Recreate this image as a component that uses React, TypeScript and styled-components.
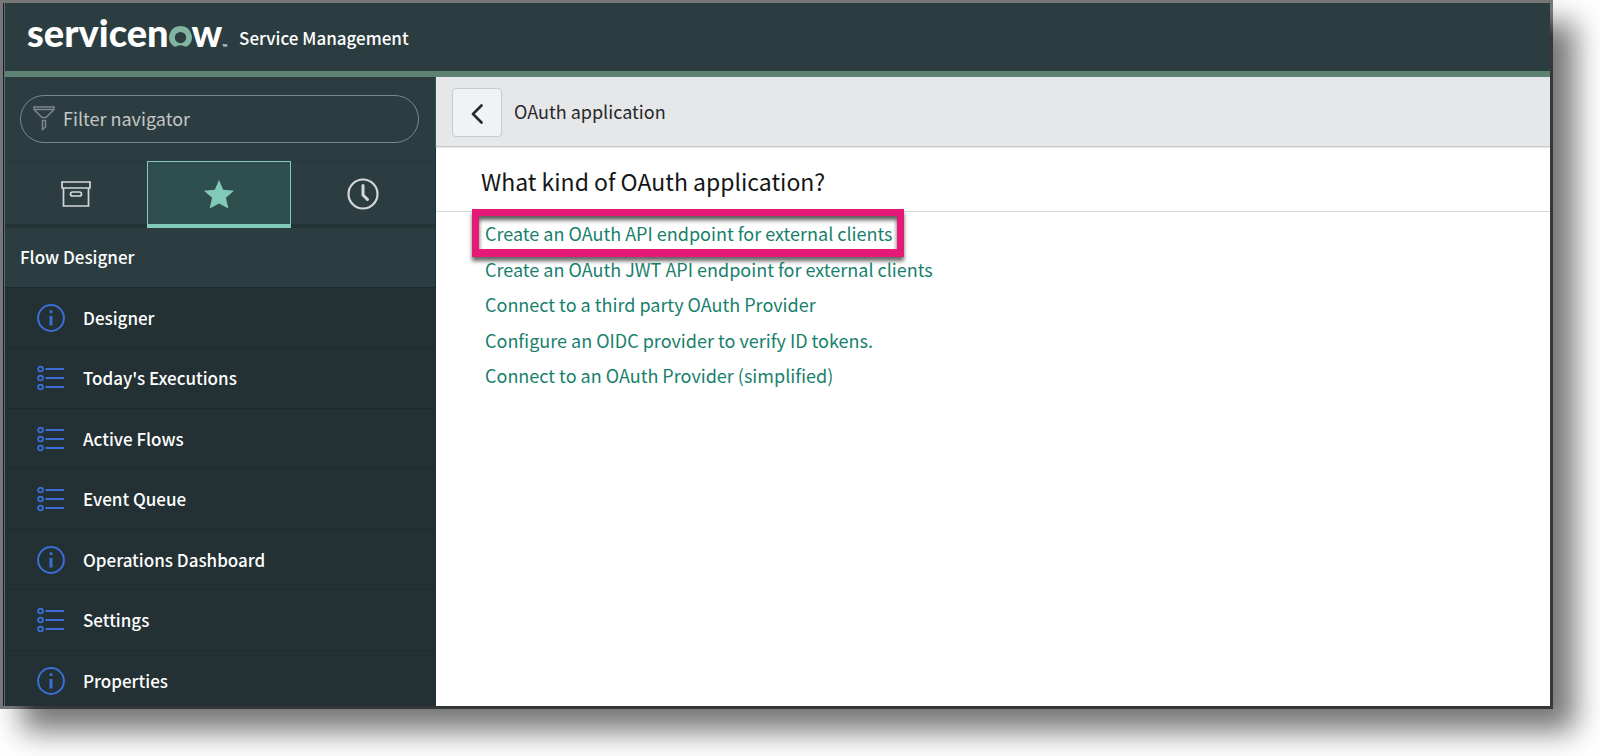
import React from "react";
import styled, { createGlobalStyle, css } from "styled-components";

const GlobalStyle = createGlobalStyle`
  *, *::before, *::after { box-sizing: border-box; }
  body {
    margin: 0;
    background: #fff;
    color: #26282a;
    font-family: "Noto Sans CJK SC", "Noto Sans", sans-serif;
    font-size: 18px;
    line-height: 24px;
  }
  button, input { font: inherit; color: inherit; }
`;

const Page = styled.div`
  display: flex;
  height: 100vh;
  padding: 0 47px 47px 0;
  overflow: hidden;
`;

const Frame = styled.div`
  flex: 1;
  min-width: 0;
  display: flex;
  padding: 3px;
  background:
    linear-gradient(to bottom, #777 12px, #363738 36px) right top / 3px 100% no-repeat,
    linear-gradient(to right, #777 12px, #363738 36px) left bottom / 100% 3px no-repeat,
    #777;
  box-shadow: 22px 22px 28px rgba(0, 0, 0, 0.54);
`;

const Window = styled.div`
  flex: 1;
  min-width: 0;
  display: flex;
  flex-direction: column;
  border-left: 1px solid #1c1730;
  background: #fff;
  overflow: hidden;
`;

const Banner = styled.header`
  flex: none;
  display: flex;
  align-items: center;
  gap: 12px;
  height: 74px;
  padding: 0 0 6px 22px;
  border-left: 1px solid #5c6e70;
  border-bottom: 6px solid #5d8272;
  background: #2b3d41;
  color: #fff;
`;

const Logo = styled.a`
  display: flex;
  align-items: baseline;
  margin-bottom: 4px;
  color: #fff;
  font-family: Lato, sans-serif;
  font-size: 38px;
  font-weight: 900;
  line-height: 40px;
  text-decoration: none;
`;

const LogoRing = styled.svg`
  width: 23px;
  height: 21px;
`;

const Trademark = styled.small`
  font-size: 3px;
  line-height: 4px;
`;

const Product = styled.span`
  padding-top: 8px;
  font-size: 17px;
  font-weight: 500;
`;

const Body = styled.div`
  flex: 1;
  min-height: 0;
  display: flex;
`;

const Sidebar = styled.nav`
  flex: none;
  width: 432px;
  border-left: 1px solid #5c6e70;
  border-right: 1px solid #12343d;
  background: #2b3d41;
  color: #fff;
  overflow: hidden;
`;

const Filter = styled.label`
  display: flex;
  align-items: center;
  gap: 8px;
  height: 48px;
  margin: 18px 16px 18px 15px;
  padding: 0 12px 2px;
  border: 1px solid #7d868f;
  border-radius: 24px;
`;

const FilterInput = styled.input`
  flex: 1;
  min-width: 0;
  padding: 0;
  border: 0;
  outline: 0;
  background: none;
  &::placeholder { color: #c4c6c5; opacity: 1; }
`;

const Tabs = styled.div`
  display: grid;
  grid-template-columns: 142px 144px 1fr;
  height: 67px;
`;

const Tab = styled.button<{ $active?: boolean }>`
  display: flex;
  align-items: center;
  justify-content: center;
  padding: 2px 0 0;
  border: 0;
  border-top: 1px solid #25363a;
  border-bottom: 4px solid #233235;
  background: none;
  color: #d5d8d9;
  ${(p) =>
    p.$active &&
    css`
      border: 1px solid #81cab7;
      border-bottom: 4px solid #81cab7;
      background: #2f4f4e;
      color: #81cab7;
    `}
`;

const SectionTitle = styled.h2`
  display: flex;
  align-items: center;
  height: 59px;
  margin: 0;
  padding: 0 0 2px 15px;
  font-size: 17px;
  font-weight: 500;
`;

const Menu = styled.ul`
  margin: 0;
  padding: 0;
  list-style: none;
  background: #233134;
`;

const MenuItem = styled.li`
  height: 60px;
  border-top: 1px solid #1e2b2d;
  &:nth-child(even) { height: 61px; }
`;

const MenuLink = styled.a`
  display: flex;
  align-items: center;
  gap: 18px;
  height: 100%;
  padding-left: 32px;
  color: #fff;
  font-size: 17px;
  font-weight: 500;
  text-decoration: none;
  svg { color: #3b6fd8; }
`;

const Content = styled.main`
  flex: 1;
  min-width: 0;
  background: #fff;
`;

const Toolbar = styled.div`
  display: flex;
  align-items: center;
  gap: 12px;
  height: 70px;
  padding: 1px 16px 0;
  border-bottom: 1px solid #c9caca;
  background: #e6e7e9;
  box-shadow: 0 1px 1px #e8e8e8;
`;

const BackButton = styled.button`
  display: flex;
  align-items: center;
  justify-content: center;
  width: 50px;
  height: 49px;
  padding: 4px 0 0;
  border: 1px solid #c8cacd;
  border-radius: 4px;
  background: #f1f2f4;
`;

const Title = styled.h1`
  margin: 0;
  padding-bottom: 2px;
  font-size: 18px;
  font-weight: 400;
`;

const Question = styled.h2`
  margin: 0;
  padding: 18px 45px 14px;
  border-bottom: 1px solid #d6d7d8;
  color: #151617;
  font-size: 23px;
  line-height: 32px;
  font-weight: 400;
`;

const Choices = styled.ul`
  display: flex;
  flex-direction: column;
  align-items: flex-start;
  margin: 0;
  padding: 4px 49px;
  list-style: none;
  line-height: 35px;
  li:nth-child(even) { line-height: 36px; }
`;

const Choice = styled.a<{ $highlighted?: boolean }>`
  position: relative;
  display: block;
  color: #17806c;
  text-decoration: none;
  ${(p) =>
    p.$highlighted &&
    css`
      &::after {
        content: "";
        position: absolute;
        inset: -7px -11px -6px -13px;
        border: 7px solid #e51a78;
        border-bottom-width: 8px;
        box-shadow: 0 4px 4px rgba(0, 0, 0, 0.6), inset 0 4px 4px rgba(0, 0, 0, 0.65);
        pointer-events: none;
      }
    `}
`;

const FunnelIcon = () => (
  <svg width="22" height="26" viewBox="0 0 22 26" fill="none" stroke="#7d868f" strokeWidth="1.5" aria-hidden="true">
    <path d="M1 2H21V4.5L13 12.5H9L1 4.5ZM1 4.5H21M9.5 15.5H12.5V22L9.5 24.5Z" />
  </svg>
);

const ArchiveIcon = () => (
  <svg width="30" height="26" viewBox="0 0 30 26" fill="none" stroke="currentColor" strokeWidth="1.7" aria-hidden="true">
    <path d="M1 1H29V7H1ZM2.5 7V25H27.5V7" />
    <rect x="9.5" y="11" width="11" height="4" rx="2" />
  </svg>
);

const StarIcon = () => (
  <svg width="30" height="29" viewBox="0 0 30 29" fill="currentColor" aria-hidden="true">
    <path d="M15 0L19.2 9.8L30 10.8L21.9 17.8L24.4 28.4L15 23.4L5.6 28.4L8.1 17.8L0 10.8L10.8 9.8Z" />
  </svg>
);

const ClockIcon = () => (
  <svg width="32" height="32" viewBox="0 0 32 32" fill="none" stroke="currentColor" strokeWidth="2.2" strokeLinecap="round" strokeLinejoin="round" aria-hidden="true">
    <circle cx="16" cy="16" r="14.5" />
    <path d="M16 7.5V17L20.5 21.5" strokeWidth="3" />
  </svg>
);

const InfoIcon = () => (
  <svg width="28" height="28" viewBox="0 0 28 28" fill="none" stroke="currentColor" aria-hidden="true">
    <circle cx="14" cy="14" r="12.9" strokeWidth="2" />
    <path d="M14 12V21.5" strokeWidth="3" />
    <circle cx="14" cy="7.7" r="1.6" fill="currentColor" stroke="none" />
  </svg>
);

const ListIcon = () => (
  <svg width="28" height="26" viewBox="0 0 28 26" fill="none" stroke="currentColor" strokeWidth="1.8" aria-hidden="true">
    <circle cx="3.5" cy="4" r="2.4" />
    <circle cx="3.5" cy="13" r="2.4" />
    <circle cx="3.5" cy="22" r="2.4" />
    <path d="M8.5 4H27M8.5 13H27M8.5 22H27" strokeWidth="2" />
  </svg>
);

const ChevronIcon = () => (
  <svg width="12" height="20" viewBox="0 0 12 20" fill="none" stroke="#26282a" strokeWidth="2.6" strokeLinecap="round" strokeLinejoin="round" aria-hidden="true">
    <path d="M10.5 1.5L2 10L10.5 18.5" />
  </svg>
);

const modules = [
  { label: "Designer", Icon: InfoIcon },
  { label: "Today's Executions", Icon: ListIcon },
  { label: "Active Flows", Icon: ListIcon },
  { label: "Event Queue", Icon: ListIcon },
  { label: "Operations Dashboard", Icon: InfoIcon },
  { label: "Settings", Icon: ListIcon },
  { label: "Properties", Icon: InfoIcon },
];

const choices = [
  "Create an OAuth API endpoint for external clients",
  "Create an OAuth JWT API endpoint for external clients",
  "Connect to a third party OAuth Provider",
  "Configure an OIDC provider to verify ID tokens.",
  "Connect to an OAuth Provider (simplified)",
];

export default function App() {
  return (
    <Page>
      <GlobalStyle />
      <Frame>
        <Window>
          <Banner>
            <Logo href="#home">
              servicen
              <LogoRing viewBox="0 0 22 20" role="img" aria-label="o">
                <path
                  fill="#81b5a1"
                  fillRule="evenodd"
                  d="M11 0A10.8 10.8 0 0 0 3.6 18.7Q5.4 20.4 7.4 19.3Q11 17.2 14.6 19.3Q16.6 20.4 18.4 18.7A10.8 10.8 0 0 0 11 0ZM11 5.6A5.4 5.4 0 1 1 11 16.4A5.4 5.4 0 1 1 11 5.6Z"
                />
              </LogoRing>
              w<Trademark>TM</Trademark>
            </Logo>
            <Product>Service Management</Product>
          </Banner>
          <Body>
            <Sidebar aria-label="Application navigator">
              <Filter>
                <FunnelIcon />
                <FilterInput type="text" placeholder="Filter navigator" aria-label="Filter navigator" />
              </Filter>
              <Tabs>
                <Tab type="button" aria-label="All applications"><ArchiveIcon /></Tab>
                <Tab type="button" aria-label="Favorites" $active><StarIcon /></Tab>
                <Tab type="button" aria-label="History"><ClockIcon /></Tab>
              </Tabs>
              <SectionTitle>Flow Designer</SectionTitle>
              <Menu>
                {modules.map(({ label, Icon }) => (
                  <MenuItem key={label}>
                    <MenuLink href="#module"><Icon />{label}</MenuLink>
                  </MenuItem>
                ))}
              </Menu>
            </Sidebar>
            <Content>
              <Toolbar>
                <BackButton type="button" aria-label="Back"><ChevronIcon /></BackButton>
                <Title>OAuth application</Title>
              </Toolbar>
              <Question>What kind of OAuth application?</Question>
              <Choices>
                {choices.map((label, index) => (
                  <li key={label}>
                    <Choice href="#choice" $highlighted={index === 0}>{label}</Choice>
                  </li>
                ))}
              </Choices>
            </Content>
          </Body>
        </Window>
      </Frame>
    </Page>
  );
}
